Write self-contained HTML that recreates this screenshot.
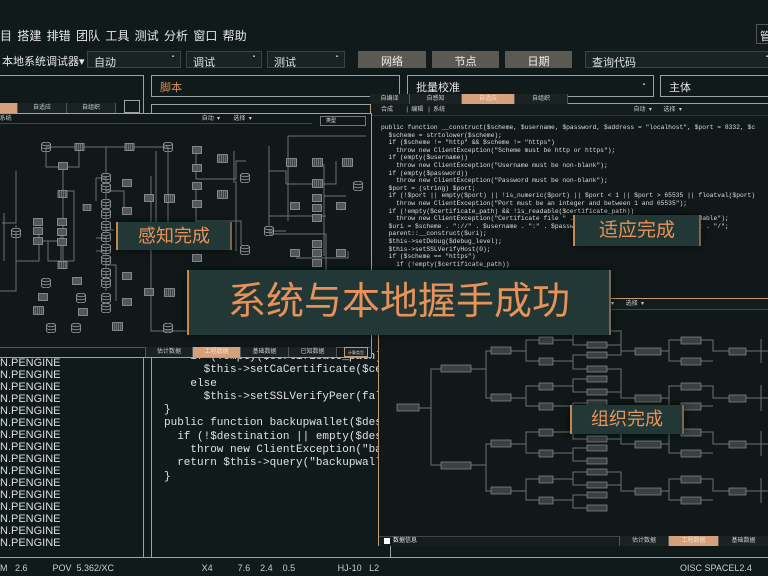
<!DOCTYPE html>
<html><head><meta charset="utf-8">
<style>
*{margin:0;padding:0;box-sizing:border-box}
body{width:768px;height:576px;background:#101a1b;overflow:hidden;position:relative;font-family:"Liberation Sans","Noto Sans CJK SC",sans-serif;color:#e6e6e6}
.a{position:absolute}
.dd{position:absolute;border:1px solid #3a4444;background:#1a2324;font-size:11px;padding:2px 0 0 6px;height:17px;color:#e0e0e0}
.dd:after{content:"▪";position:absolute;right:6px;top:2px;font-size:6px}
.btn{position:absolute;background:#5a5954;color:#eee;font-size:11px;text-align:center;height:17px;padding-top:2px}
.box{position:absolute;border:1px solid #9aa3a0}
.mono{font-family:"Liberation Mono",monospace}
.win{position:absolute;background:#101819;border:1.5px solid #c49a72}
.tab{position:absolute;font-size:6px;text-align:center;color:#ccc;background:#1a2222;border-right:1px solid #555;height:10px;line-height:10px}
.on{background:#d6a07a;color:#f5e0d0}
.ban{position:absolute;background:#213836;color:#e8925a;text-align:center;box-shadow:0 0 8px rgba(0,0,0,.6);border-left:2px solid #c4884f;border-right:2px solid #7a6850}
.list div{height:12px;font-size:11px;line-height:12px;color:#ddd}
.code div{white-space:pre;font-size:11px;line-height:13.3px;color:#e0e0e0}
.sc div{white-space:pre;font-size:6.3px;line-height:7.6px;color:#ddd}
</style></head><body>
<div class="a" style="left:0;top:27px;font-size:12px;word-spacing:2px">目 搭建 排错 团队 工具 测试 分析 窗口 帮助</div>
<div class="a" style="left:756px;top:24px;width:30px;height:20px;border:1px solid #555;font-size:11px;padding:3px 0 0 3px">管</div>
<div class="a" style="left:2px;top:53px;font-size:11px">本地系统调试器▾</div>
<div class="dd" style="left:87px;top:51px;width:94px">自动</div>
<div class="dd" style="left:186px;top:51px;width:76px">调试</div>
<div class="dd" style="left:267px;top:51px;width:78px">测试</div>
<div class="btn" style="left:358px;top:51px;width:68px">网络</div>
<div class="btn" style="left:432px;top:51px;width:67px">节点</div>
<div class="btn" style="left:505px;top:51px;width:67px">日期</div>
<div class="dd" style="left:585px;top:51px;width:190px">查询代码</div>
<div class="box" style="left:-2px;top:75px;width:146px;height:483px"></div>
<div class="box" style="left:151px;top:75px;width:249px;height:22px;font-size:11px;color:#d69060;padding:3px 0 0 8px">脚本</div>
<div class="box" style="left:407px;top:75px;width:247px;height:22px;font-size:11px;padding:3px 0 0 8px">批量校准<span style="position:absolute;right:8px;font-size:6px;top:6px">▪</span></div>
<div class="box" style="left:660px;top:75px;width:120px;height:22px;font-size:11px;padding:3px 0 0 8px">主体</div>
<div class="box" style="left:151px;top:104px;width:240px;height:454px"></div>
<div class="box" style="left:124px;top:100px;width:16px;height:13px"></div>
<div class="a list" style="left:0;top:357px">
<div>N.PENGINE</div><div>N.PENGINE</div><div>N.PENGINE</div><div>N.PENGINE</div><div>N.PENGINE</div><div>N.PENGINE</div><div>N.PENGINE</div><div>N.PENGINE</div><div>N.PENGINE</div><div>N.PENGINE</div><div>N.PENGINE</div><div>N.PENGINE</div><div>N.PENGINE</div><div>N.PENGINE</div><div>N.PENGINE</div><div>N.PENGINE</div></div>
<div class="a code mono" style="left:164px;top:351px">
<div>    if (!empty($certificate_path))</div><div>      $this->setCaCertificate($certificate_path);</div><div>    else</div><div>      $this->setSSLVerifyPeer(false);</div><div>}</div><div>public function backupwallet($destination) {</div><div>  if (!$destination || empty($destination))</div><div>    throw new ClientException("backup destination");</div><div>  return $this->query("backupwallet", [$destination]);</div><div>}</div></div>
<div class="a" style="left:0;top:557px;width:768px;height:1px;background:#9aa3a0"></div>
<div class="a" style="left:0;top:563px;font-size:9px;color:#ccc;width:768px;white-space:pre">M   2.6          POV  5.362/XC                                   X4          7.6    2.4    0.5                 HJ-10   L2</div>
<div class="a" style="left:680px;top:563px;font-size:9px;color:#ccc">OISC SPACEL2.4</div>

<!-- window 2 -->
<div class="win" style="left:370px;top:103px;width:410px;height:200px;border-right:none">
<div class="a" style="left:0;top:0;width:410px;height:12px;background:#141d1e;border-bottom:1px solid #333;font-size:6px;color:#ccc;line-height:12px;white-space:pre">      合成        |  编辑   |  系统                                                                                                                 自动  ▾       选择  ▾</div>
<div class="a sc mono" style="left:10px;top:20px">
<div>public function __construct($scheme, $username, $password, $address = "localhost", $port = 8332, $c</div><div>  $scheme = strtolower($scheme);</div><div>  if ($scheme != "http" && $scheme != "https")</div><div>    throw new ClientException("Scheme must be http or https");</div><div>  if (empty($username))</div><div>    throw new ClientException("Username must be non-blank");</div><div>  if (empty($password))</div><div>    throw new ClientException("Password must be non-blank");</div><div>  $port = (string) $port;</div><div>  if (!$port || empty($port) || !is_numeric($port) || $port < 1 || $port > 65535 || floatval($port)</div><div>    throw new ClientException("Port must be an integer and between 1 and 65535");</div><div>  if (!empty($certificate_path) && !is_readable($certificate_path))</div><div>    throw new ClientException("Certificate file " . $certificate_path . " is not readable");</div><div>  $uri = $scheme . "://" . $username . ":" . $password . "@" . $address . ":" . $port . "/";</div><div>  parent::__construct($uri);</div><div>  $this->setDebug($debug_level);</div><div>  $this->setSSLVerifyHost(0);</div><div>  if ($scheme == "https")</div><div>    if (!empty($certificate_path))</div></div>
</div>
<div class="tab" style="left:370px;top:94px;width:40px">自编译</div>
<div class="tab" style="left:410px;top:94px;width:52px">自感知</div>
<div class="tab on" style="left:462px;top:94px;width:53px">自适应</div>
<div class="tab" style="left:515px;top:94px;width:53px">自组织</div>

<!-- window 3 -->
<div class="win" style="left:378px;top:298px;width:400px;height:248px;border-right:none">
<div class="a" style="left:0;top:0;width:400px;height:11px;background:#141d1e;border-bottom:1px solid #444;font-size:6px;color:#ccc;line-height:11px;white-space:pre">                                                                                                                                  自动  ▾       选择  ▾</div>
<svg class="a" style="left:0;top:0" width="400" height="248" viewBox="378 298 400 248">
<g stroke="#6c7272" fill="none" stroke-width="1">
<path d="M407 407H430V368H450M430 407V464H450M470 368H485V350H500M485 368V397H500M470 464H485V443H500M485 464V490H500M510 350H525V339H538M525 350V360H538M510 397H525V385H538M525 397V405H538M510 443H525V431H538M525 443V452H538M510 490H525V478H538M525 490V499H538"/>
<path d="M550 339H572V330H586M572 339V344H586M550 360H572V354H586M572 360V368H586M550 385H572V378H586M572 385V391H586M550 405H572V402H586M572 405V414H586M550 431H572V426H586M572 431V438H586M550 452H572V447H586M572 452V460H586M550 478H572V471H586M572 478V484H586M550 499H572V494H586M572 499V507H586"/>
<path d="M606 330H620V350H634M606 344H620M606 354H620V350M606 368H620V397H634M606 391H620M606 426H620V443H634M606 438H620M606 471H620V490H634M606 484H620M660 350H668V339H680M668 350V360H680M660 397H668V385H680M668 397V405H680M660 443H668V431H680M668 443V452H680M660 490H668V478H680M668 490V499H680M700 339H712V350H728M700 360H712M700 385H712V397H728M700 405H712M700 431H712V443H728M700 452H712M700 478H712V490H728M700 499H712M745 350H768M745 397H768M745 443H768M745 490H768M760 338V362M760 384V410M760 430V455M760 477V502"/>
</g>
<g fill="#3a4142" stroke="#8a8f8f" stroke-width=".7">
<rect x="396" y="403" width="22" height="7"/>
<rect x="440" y="364" width="30" height="7"/><rect x="440" y="461" width="30" height="7"/>
<rect x="490" y="346" width="20" height="7"/><rect x="490" y="393" width="20" height="7"/><rect x="490" y="439" width="20" height="7"/><rect x="490" y="486" width="20" height="7"/>
<rect x="538" y="336" width="14" height="7"/><rect x="538" y="357" width="14" height="7"/><rect x="538" y="382" width="14" height="7"/><rect x="538" y="402" width="14" height="7"/><rect x="538" y="428" width="14" height="7"/><rect x="538" y="449" width="14" height="7"/><rect x="538" y="475" width="14" height="7"/><rect x="538" y="496" width="14" height="7"/>
<rect x="586" y="327" width="20" height="6"/><rect x="586" y="341" width="20" height="6"/><rect x="586" y="351" width="20" height="6"/><rect x="586" y="365" width="20" height="6"/><rect x="586" y="375" width="20" height="6"/><rect x="586" y="388" width="20" height="6"/><rect x="586" y="399" width="20" height="6"/><rect x="586" y="411" width="20" height="6"/><rect x="586" y="423" width="20" height="6"/><rect x="586" y="435" width="20" height="6"/><rect x="586" y="444" width="20" height="6"/><rect x="586" y="457" width="20" height="6"/><rect x="586" y="468" width="20" height="6"/><rect x="586" y="481" width="20" height="6"/><rect x="586" y="491" width="20" height="6"/><rect x="586" y="504" width="20" height="6"/>
<rect x="634" y="347" width="26" height="7"/><rect x="634" y="394" width="26" height="7"/><rect x="634" y="440" width="26" height="7"/><rect x="634" y="487" width="26" height="7"/>
<rect x="680" y="336" width="20" height="7"/><rect x="680" y="357" width="20" height="7"/><rect x="680" y="382" width="20" height="7"/><rect x="680" y="402" width="20" height="7"/><rect x="680" y="428" width="20" height="7"/><rect x="680" y="449" width="20" height="7"/><rect x="680" y="475" width="20" height="7"/><rect x="680" y="496" width="20" height="7"/>
<rect x="728" y="347" width="17" height="7"/><rect x="728" y="394" width="17" height="7"/><rect x="728" y="440" width="17" height="7"/><rect x="728" y="487" width="17" height="7"/>
</g></svg>
<div class="a" style="left:0;top:237px;width:400px;height:10px;border-top:1px solid #444;background:#141d1e"></div>
<div class="a" style="left:5px;top:239px;width:6px;height:6px;background:#fff"></div>
<div class="a" style="left:14px;top:237px;font-size:6px;line-height:10px">数据信息</div>
<div class="tab" style="left:240px;top:237px;width:50px;border-left:1px solid #555">估计数据</div>
<div class="tab on" style="left:290px;top:237px;width:50px">工程数据</div>
<div class="tab" style="left:340px;top:237px;width:50px">基础数据</div>
</div>

<!-- window 1 -->
<div class="win" style="left:-2px;top:113px;width:374px;height:245px;border-left:none">
<div class="a" style="left:0;top:0;width:314px;height:10px;border-bottom:1px solid #444;font-size:6px;color:#ccc;line-height:10px;white-space:pre"> 系统                                                                                                                  自动  ▾        选择  ▾</div>
<div class="a" style="left:322px;top:2px;width:46px;height:10px;border:1px solid #777;font-size:5px;line-height:8px;padding-left:5px">类型</div>
<svg class="a" style="left:0;top:0" width="372" height="232" viewBox="2 113 372 232">
<g stroke="#6c7272" fill="none">
<path d="M50 146V166H83V146M67 166V190M67 190H78V220M67 190V260H78M50 146H83M83 146H133H172V230M110 146V290M100 177H110M100 250H110V229H118M110 264H120V300M100 237H110M6 222H20V170H20M20 224V290H2M20 260H43V230M43 240V240H52H65M52 240V260H65V230M78 220V260M110 190H128V207H130M200 182V230H206M172 230H200M100 177V200M8 212V260M160 150V235M155 175V330H240M200 145V178H240V160H250M200 220H245V244M240 180V250M238 182V150M273 145V230H290M273 170H290V183M290 183H340V160M273 147V190M328 163V255M273 215H330M273 233H330V270M292 135H370M292 135V220M328 195H350M300 257H352V250M300 280H352"/>
</g>
<defs>
<symbol id="db" viewBox="0 0 10 10"><ellipse cx="5" cy="2" rx="4.5" ry="1.8" fill="#1b2424" stroke="#9aa0a0" stroke-width=".8"/><path d="M.5 2V8A4.5 1.8 0 0 0 9.5 8V2M.5 5A4.5 1.8 0 0 0 9.5 5" fill="none" stroke="#9aa0a0" stroke-width=".8"/></symbol>
<symbol id="sv" viewBox="0 0 10 8"><rect x=".5" y=".5" width="9" height="7" fill="#3a3f40" stroke="#9aa0a0" stroke-width=".8"/><path d="M2 1V7M4 1V7M6 1V7M8 1V7" stroke="#9aa0a0" stroke-width=".5"/></symbol>
</defs>
<g>
<use href="#db" x="45" y="141" width="10" height="10"/><use href="#sv" x="78" y="142" width="11" height="8"/><use href="#sv" x="62" y="161" width="10" height="8"/><use href="#sv" x="128" y="142" width="11" height="8"/><use href="#db" x="167" y="141" width="10" height="10"/>
<use href="#sv" x="61" y="189" width="11" height="8"/><use href="#sv" x="86" y="203" width="10" height="7"/><use href="#sv" x="37" y="217" width="10" height="8"/><use href="#sv" x="37" y="226" width="10" height="8"/><use href="#sv" x="37" y="236" width="10" height="8"/><use href="#db" x="15" y="227" width="10" height="10"/>
<use href="#sv" x="61" y="217" width="10" height="8"/><use href="#sv" x="61" y="227" width="10" height="8"/><use href="#sv" x="61" y="237" width="10" height="8"/><use href="#sv" x="61" y="260" width="11" height="8"/>
<use href="#db" x="105" y="172" width="10" height="10"/><use href="#db" x="105" y="182" width="10" height="10"/><use href="#db" x="105" y="198" width="10" height="10"/><use href="#db" x="105" y="208" width="10" height="10"/><use href="#db" x="105" y="220" width="10" height="10"/><use href="#db" x="105" y="231" width="10" height="10"/><use href="#db" x="105" y="243" width="10" height="10"/><use href="#db" x="105" y="254" width="10" height="10"/><use href="#db" x="105" y="267" width="10" height="10"/><use href="#db" x="105" y="277" width="10" height="10"/><use href="#db" x="105" y="292" width="10" height="10"/><use href="#db" x="105" y="302" width="10" height="10"/>
<use href="#sv" x="126" y="178" width="10" height="8"/><use href="#sv" x="126" y="206" width="10" height="8"/><use href="#sv" x="148" y="193" width="10" height="8"/><use href="#sv" x="168" y="193" width="11" height="9"/><use href="#sv" x="126" y="271" width="10" height="8"/><use href="#sv" x="148" y="287" width="10" height="8"/><use href="#sv" x="168" y="287" width="11" height="9"/><use href="#sv" x="126" y="297" width="10" height="8"/>
<use href="#db" x="45" y="277" width="10" height="10"/><use href="#sv" x="76" y="276" width="10" height="8"/><use href="#sv" x="42" y="292" width="10" height="8"/><use href="#db" x="80" y="292" width="10" height="10"/><use href="#sv" x="37" y="305" width="11" height="9"/><use href="#sv" x="82" y="307" width="10" height="8"/><use href="#db" x="50" y="322" width="10" height="10"/><use href="#db" x="75" y="322" width="10" height="10"/><use href="#sv" x="116" y="321" width="11" height="9"/><use href="#db" x="167" y="322" width="10" height="10"/>
<use href="#sv" x="196" y="145" width="10" height="8"/><use href="#sv" x="196" y="163" width="10" height="8"/><use href="#sv" x="221" y="153" width="11" height="9"/><use href="#db" x="244" y="172" width="10" height="10"/><use href="#sv" x="196" y="181" width="10" height="8"/><use href="#sv" x="196" y="199" width="10" height="8"/><use href="#sv" x="221" y="189" width="11" height="9"/><use href="#db" x="244" y="244" width="10" height="10"/><use href="#sv" x="196" y="253" width="10" height="8"/><use href="#db" x="268" y="225" width="10" height="10"/>
<use href="#sv" x="290" y="157" width="11" height="9"/><use href="#sv" x="316" y="157" width="11" height="9"/><use href="#sv" x="346" y="157" width="11" height="9"/><use href="#sv" x="316" y="178" width="11" height="9"/><use href="#db" x="357" y="180" width="10" height="10"/><use href="#sv" x="316" y="193" width="10" height="8"/><use href="#sv" x="316" y="203" width="10" height="8"/><use href="#sv" x="316" y="213" width="10" height="8"/><use href="#sv" x="294" y="201" width="10" height="8"/><use href="#sv" x="340" y="201" width="10" height="8"/><use href="#sv" x="316" y="239" width="10" height="8"/><use href="#sv" x="316" y="248" width="10" height="8"/><use href="#sv" x="316" y="258" width="10" height="8"/><use href="#sv" x="294" y="248" width="10" height="8"/><use href="#sv" x="340" y="248" width="10" height="8"/>
</g></svg>
<div class="a" style="left:0;top:233px;width:374px;height:10px;border-top:1px solid #555"></div>
<div class="tab" style="left:147px;top:233px;width:48px;border-left:1px solid #555">估计数据</div>
<div class="tab on" style="left:195px;top:233px;width:48px">工程数据</div>
<div class="tab" style="left:243px;top:233px;width:48px">基础数据</div>
<div class="tab" style="left:291px;top:233px;width:48px">已知数据</div>
<div class="tab" style="left:346px;top:233px;width:24px;border:1px solid #c49a72;font-size:4px">计算类型</div>
</div>
<div class="tab on" style="left:0;top:103px;width:18px"></div>
<div class="tab" style="left:18px;top:103px;width:49px">自适应</div>
<div class="tab" style="left:67px;top:103px;width:49px">自组织</div>

<div class="ban" style="left:116px;top:222px;width:116px;height:28px;font-size:18px;line-height:28px">感知完成</div>
<div class="ban" style="left:573px;top:215px;width:128px;height:31px;font-size:19px;line-height:31px">适应完成</div>
<div class="ban" style="left:570px;top:405px;width:114px;height:29px;font-size:18px;line-height:29px">组织完成</div>
<div class="ban" style="left:187px;top:270px;width:424px;height:65px;font-size:38px;line-height:65px">系统与本地握手成功</div>
</body></html>
